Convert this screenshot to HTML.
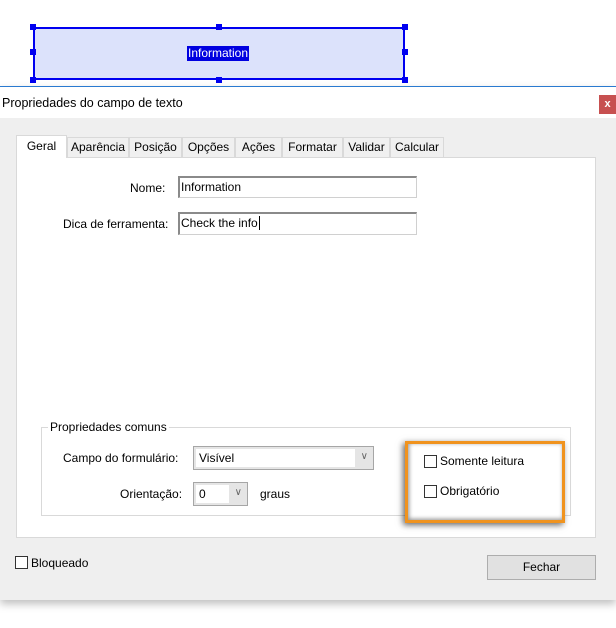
<!DOCTYPE html>
<html><head><style>
*{box-sizing:border-box;margin:0;padding:0}
body{width:616px;height:628px;background:#fff;position:relative;overflow:hidden;font-family:"Liberation Sans",sans-serif;font-size:12px;color:#000}
.a{position:absolute}
.h{position:absolute;width:6px;height:6px;background:#0000f0}
.tab{position:absolute;top:137px;height:20px;border:1px solid #d9d9d9;border-bottom:none;background:#f0f0f0;text-align:center;line-height:19px}
.inp{position:absolute;background:#fff;border:1px solid #d0d0d0;border-top:2px solid #8a8a8a;border-left:2px solid #8a8a8a;padding-left:1px;line-height:18px}
.cb{position:absolute;width:13px;height:13px;border:1px solid #333;background:#fff}
.cmb{position:absolute;border:1px solid #a6a6a6;background:#e5e5e5}
.cmb .w{position:absolute;left:2px;top:2px;bottom:2px;background:#fff;padding-left:3px;line-height:18px}
</style></head><body>
<div class="a" style="left:33px;top:27px;width:372px;height:53px;border:2px solid #0000f0;background:#dce2fb"></div>
<div class="h" style="left:30px;top:24px"></div><div class="h" style="left:216px;top:24px"></div><div class="h" style="left:402px;top:24px"></div>
<div class="h" style="left:30px;top:49px"></div><div class="h" style="left:402px;top:49px"></div>
<div class="h" style="left:30px;top:77px"></div><div class="h" style="left:216px;top:77px"></div><div class="h" style="left:402px;top:77px"></div>
<div class="a" style="left:187px;top:46px;height:15px;background:#0000e0;color:#fff;line-height:15px;padding:0 1px">Information</div>

<div class="a" style="left:0;top:86px;width:616px;height:514px;background:#efefef;border-top:1px solid #2a7ad0;box-shadow:0 4px 8px rgba(0,0,0,.25)"></div>
<div class="a" style="left:0;top:87px;width:616px;height:31px;background:#fff"></div>
<div class="a" style="left:2px;top:96px;font-size:12.5px">Propriedades do campo de texto</div>
<div class="a" style="left:599px;top:95px;width:17px;height:19px;background:#c75050;color:#fff;font-weight:bold;text-align:center;line-height:18px;font-size:11px">x</div>

<div class="a" style="left:16px;top:157px;width:580px;height:381px;border:1px solid #d9d9d9;background:#fff"></div>
<div class="tab" style="left:16px;top:135px;width:51px;height:23px;background:#fff;line-height:20px">Geral</div>
<div class="tab" style="left:67px;width:62px">Aparência</div>
<div class="tab" style="left:129px;width:53px">Posição</div>
<div class="tab" style="left:182px;width:53px">Opções</div>
<div class="tab" style="left:235px;width:47px">Ações</div>
<div class="tab" style="left:282px;width:61px">Formatar</div>
<div class="tab" style="left:343px;width:47px">Validar</div>
<div class="tab" style="left:390px;width:54px">Calcular</div>

<div class="a" style="left:130px;top:181px">Nome:</div>
<div class="inp" style="left:178px;top:176px;width:239px;height:22px">Information</div>
<div class="a" style="left:63px;top:217px">Dica de ferramenta:</div>
<div class="inp" style="left:178px;top:212px;width:239px;height:23px">Check the info<span style="border-left:1px solid #000;margin-left:1px"></span></div>

<div class="a" style="left:41px;top:427px;width:530px;height:89px;border:1px solid #d9d9d9"></div>
<div class="a" style="left:48px;top:420px;background:#fff;padding:0 2px">Propriedades comuns</div>
<div class="a" style="left:63px;top:451px">Campo do formulário:</div>
<div class="cmb" style="left:193px;top:446px;width:181px;height:24px"><div class="w" style="right:18px">Visível</div><div class="a" style="right:5px;top:4px;color:#666;font-size:10px">&#8744;</div></div>
<div class="a" style="left:120px;top:487px">Orientação:</div>
<div class="cmb" style="left:193px;top:482px;width:55px;height:24px"><div class="w" style="right:18px">0</div><div class="a" style="right:5px;top:4px;color:#666;font-size:10px">&#8744;</div></div>
<div class="a" style="left:260px;top:487px">graus</div>

<div class="a" style="left:405px;top:441px;width:160px;height:82px;border:3px solid #f0931e;box-shadow:-2px 2px 6px rgba(0,0,0,.6), inset 1px -1px 4px rgba(0,0,0,.45);background:#fff"></div>
<div class="cb" style="left:424px;top:455px"></div><div class="a" style="left:440px;top:454px">Somente leitura</div>
<div class="cb" style="left:424px;top:485px"></div><div class="a" style="left:440px;top:484px">Obrigatório</div>

<div class="cb" style="left:15px;top:556px"></div><div class="a" style="left:31px;top:556px">Bloqueado</div>
<div class="a" style="left:487px;top:555px;width:109px;height:25px;border:1px solid #adadad;background:#e1e1e1;text-align:center;line-height:23px">Fechar</div>
</body></html>
